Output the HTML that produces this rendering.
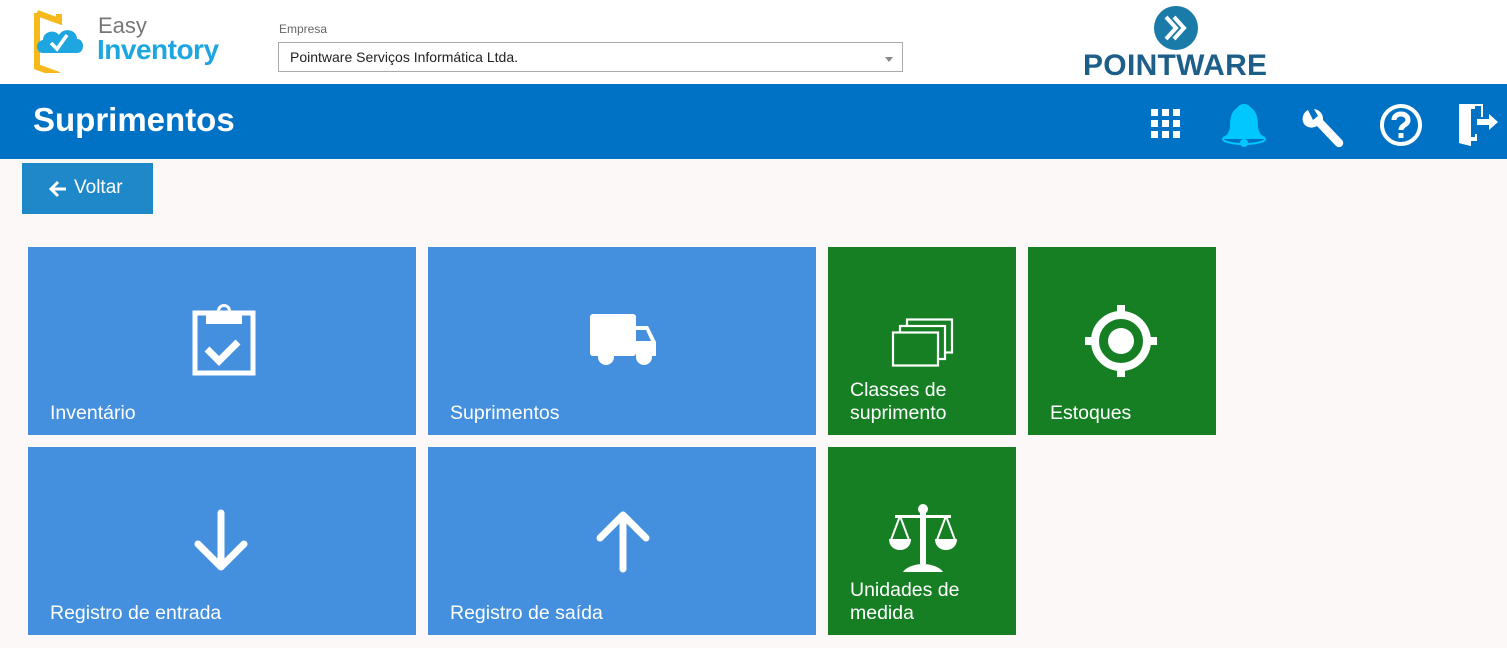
<!DOCTYPE html>
<html><head><meta charset="utf-8"><style>
*{margin:0;padding:0;box-sizing:border-box}
body{width:1507px;height:648px;overflow:hidden;background:#fcf8f7;font-family:"Liberation Sans",sans-serif;position:relative}
.hdr{position:absolute;left:0;top:0;width:1507px;height:84px;background:#fff}
.bar{position:absolute;left:0;top:84px;width:1507px;height:75px;background:#0072c6}
.bar h1{position:absolute;left:33px;top:17px;color:#fff;font-size:33px;font-weight:bold;letter-spacing:0}
.tile{position:absolute;color:#fff;font-size:19.5px;line-height:23px}
.tile .l{position:absolute;left:22px;bottom:10px}
.b{background:#448fde}.g{background:#167f23}
svg{position:absolute}
</style></head><body>
<div class="hdr">
 <svg style="left:33px;top:9px" width="60" height="64" viewBox="0 0 60 64">
  <path d="M4 4 L26 12 L26 5 M4 4 L4 58 L26 66" fill="none" stroke="#f6b91c" stroke-width="6"/>
  <path d="M10 44 C2 44 2 32 10 31 C10 22 22 20 26 26 C30 18 44 20 44 30 C52 30 52 44 44 44 Z" fill="#1ea6e0"/>
  <path d="M18 34 L24 40 L34 26" fill="none" stroke="#fff" stroke-width="3.5"/>
 </svg>
 <div style="position:absolute;left:98px;top:15px;font-size:22px;color:#777;line-height:22px">Easy</div>
 <div style="position:absolute;left:97px;top:35px;font-size:28px;font-weight:bold;color:#1ea6e0;line-height:30px;letter-spacing:-0.5px">Inventory</div>
 <div style="position:absolute;left:279px;top:22px;font-size:12px;color:#666">Empresa</div>
 <div style="position:absolute;left:278px;top:42px;width:625px;height:30px;border:1px solid #aaa;font-size:14px;color:#222;padding:6px 11px">Pointware Serviços Informática Ltda.</div>
 <div style="position:absolute;left:885px;top:57px;width:0;height:0;border-left:4px solid transparent;border-right:4px solid transparent;border-top:5px solid #888"></div>
 <svg style="left:1153px;top:5px" width="46" height="46" viewBox="0 0 46 46">
  <circle cx="23" cy="23" r="22" fill="#1a7ba8"/>
  <path d="M13 12 L23 23 L13 34 M21 12 L31 23 L21 34" fill="none" stroke="#fff" stroke-width="4"/>
 </svg>
 <div style="position:absolute;left:1083px;top:50px;font-size:30px;font-weight:bold;color:#1d5f88;letter-spacing:0.3px;line-height:32px">POINTWARE</div>
</div>
<div class="bar"><h1>Suprimentos</h1>
 <svg style="left:1150px;top:24px" width="32" height="32" viewBox="0 0 32 32" fill="#fff">
  <rect x="1" y="1" width="7" height="7"/><rect x="12" y="1" width="7" height="7"/><rect x="23" y="1" width="7" height="7"/>
  <rect x="1" y="12" width="7" height="7"/><rect x="12" y="12" width="7" height="7"/><rect x="23" y="12" width="7" height="7"/>
  <rect x="1" y="23" width="7" height="7"/><rect x="12" y="23" width="7" height="7"/><rect x="23" y="23" width="7" height="7"/>
 </svg>
 <svg style="left:1221px;top:18px" width="46" height="46" viewBox="0 0 46 46">
  <path d="M23 2 C28 2 30 6 30 6 C36 9 37 18 37 24 C37 30 41 34 44 37 L2 37 C5 34 9 30 9 24 C9 18 10 9 16 6 C16 6 18 2 23 2Z" fill="#00c8ff"/>
  <ellipse cx="23" cy="37" rx="21" ry="5" fill="none" stroke="#00c8ff" stroke-width="2"/>
  <circle cx="23" cy="41" r="4" fill="#00c8ff"/>
 </svg>
 <svg style="left:1300px;top:24px" width="46" height="40" viewBox="0 0 46 40">
  <path d="M8 2 A10 10 0 0 0 4 16 A10 10 0 0 0 17 18 L36 38 A3.5 3.5 0 0 0 42 32 L23 12 A10 10 0 0 0 14 1 L18 8 L13 12 Z" fill="#fff"/>
 </svg>
 <svg style="left:1379px;top:19px" width="44" height="44" viewBox="0 0 44 44">
  <circle cx="22" cy="22" r="19" fill="none" stroke="#fff" stroke-width="4"/>
  <path d="M15 17 C15 9 29 9 29 17 C29 22 22 22 22 27" fill="none" stroke="#fff" stroke-width="5"/>
  <rect x="19.5" y="30" width="5" height="5" fill="#fff"/>
 </svg>
 <svg style="left:1457px;top:17px" width="44" height="46" viewBox="0 0 44 46">
  <path d="M2 3 L18 3 L18 8 L14 8 L14 36 L18 36 L18 33 L20 33 L20 40 L14 40 L14 45 L2 42Z" fill="#fff"/>
  <path d="M2 3 L14 8 L14 45 L2 42Z" fill="#fff"/>
  <path d="M18 3 L26 3 L26 16 L24 16 L24 5 L18 5Z" fill="#fff"/>
  <path d="M20 18 L32 18 L32 13 L41 21 L32 29 L32 24 L20 24Z" fill="#fff"/>
 </svg>
</div>
<div style="position:absolute;left:22px;top:163px;width:131px;height:51px;background:#1e88c9;color:#fff;font-size:19px;padding:14px 0 0 26px">
 <svg style="left:26px;top:17px" width="20" height="18" viewBox="0 0 20 18"><path d="M18 9 L3 9 M10 2 L3 9 L10 16" fill="none" stroke="#fff" stroke-width="3"/></svg>
 <span style="margin-left:26px">Voltar</span></div>

<div class="tile b" style="left:28px;top:247px;width:388px;height:188px">
 <svg style="left:164px;top:57px" width="64" height="72" viewBox="0 0 64 72">
  <rect x="3" y="9" width="58" height="60" fill="none" stroke="#fff" stroke-width="5"/>
  <rect x="14" y="9" width="36" height="11" fill="#fff"/>
  <circle cx="32" cy="7" r="5.5" fill="none" stroke="#fff" stroke-width="3"/>
  <path d="M15 45 L27 57 L46 38" fill="none" stroke="#fff" stroke-width="7"/>
 </svg>
 <span class="l">Inventário</span></div>
<div class="tile b" style="left:428px;top:247px;width:388px;height:188px">
 <svg style="left:162px;top:67px" width="68" height="54" viewBox="0 0 68 54">
  <rect x="0" y="0" width="46" height="42" rx="3" fill="#fff"/>
  <path d="M46 12 L58 12 L66 28 L66 42 L46 42Z" fill="#fff"/>
  <path d="M46 16 L56 16 L61 27 L46 27Z" fill="#448fde"/>
  <circle cx="16" cy="43" r="8" fill="#fff"/><circle cx="54" cy="43" r="8" fill="#fff"/>
 </svg>
 <span class="l">Suprimentos</span></div>
<div class="tile g" style="left:828px;top:247px;width:188px;height:188px">
 <svg style="left:63px;top:71px" width="64" height="52" viewBox="0 0 64 52">
  <rect x="16" y="1.5" width="45" height="33" fill="none" stroke="#fff" stroke-width="2.2"/>
  <rect x="9" y="8" width="45" height="33" fill="#167f23" stroke="#fff" stroke-width="2.2"/>
  <rect x="2" y="14.5" width="45" height="33" fill="#167f23" stroke="#fff" stroke-width="2.2"/>
 </svg>
 <span class="l">Classes de<br>suprimento</span></div>
<div class="tile g" style="left:1028px;top:247px;width:188px;height:188px">
 <svg style="left:56px;top:57px" width="74" height="74" viewBox="0 0 74 74">
  <circle cx="37" cy="37" r="26" fill="none" stroke="#fff" stroke-width="8"/>
  <circle cx="37" cy="37" r="13" fill="#fff"/>
  <rect x="33" y="1" width="8" height="12" fill="#fff"/><rect x="33" y="61" width="8" height="12" fill="#fff"/>
  <rect x="1" y="33" width="12" height="8" fill="#fff"/><rect x="61" y="33" width="12" height="8" fill="#fff"/>
 </svg>
 <span class="l">Estoques</span></div>
<div class="tile b" style="left:28px;top:447px;width:388px;height:188px">
 <svg style="left:165px;top:62px" width="56" height="64" viewBox="0 0 56 64">
  <path d="M28 4 L28 58 M5 35 L28 58 L51 35" fill="none" stroke="#fff" stroke-width="7" stroke-linecap="round" stroke-linejoin="round"/>
 </svg>
 <span class="l">Registro de entrada</span></div>
<div class="tile b" style="left:428px;top:447px;width:388px;height:188px">
 <svg style="left:167px;top:62px" width="56" height="64" viewBox="0 0 56 64">
  <path d="M28 60 L28 6 M5 29 L28 6 L51 29" fill="none" stroke="#fff" stroke-width="7" stroke-linecap="round" stroke-linejoin="round"/>
 </svg>
 <span class="l">Registro de saída</span></div>
<div class="tile g" style="left:828px;top:447px;width:188px;height:188px">
 <svg style="left:61px;top:55px" width="68" height="72" viewBox="0 0 68 72">
  <circle cx="34" cy="7" r="5" fill="#fff"/>
  <rect x="31" y="8" width="6" height="54" fill="#fff"/>
  <rect x="6" y="13" width="56" height="3" fill="#fff"/>
  <path d="M11 14 L2 38 M11 14 L20 38 M57 14 L48 38 M57 14 L66 38" stroke="#fff" stroke-width="2" fill="none"/>
  <path d="M0 37 L22 37 C22 44 17 48 11 48 C5 48 0 44 0 37Z M46 37 L68 37 C68 44 63 48 57 48 C51 48 46 44 46 37Z" fill="#fff"/>
  <path d="M14 70 C18 64 28 62 34 62 C40 62 50 64 54 70Z" fill="#fff"/>
 </svg>
 <span class="l">Unidades de<br>medida</span></div>
</body></html>
